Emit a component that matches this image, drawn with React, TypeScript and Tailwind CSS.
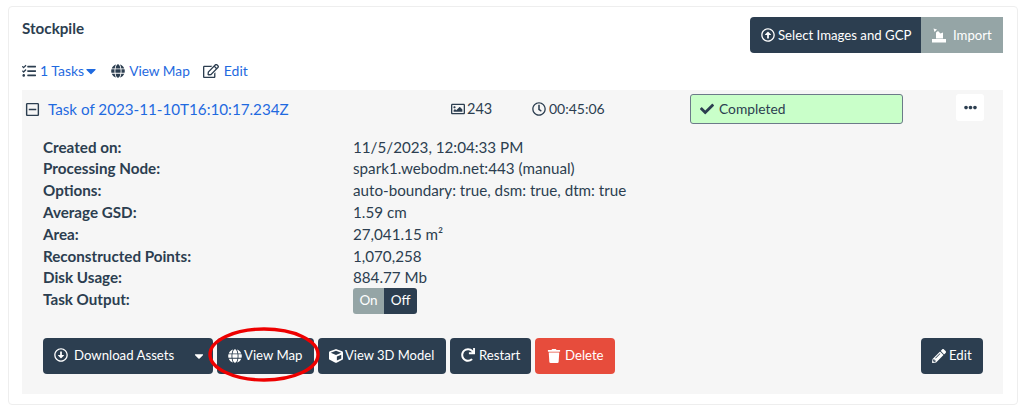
import React from "react";
import {
  FaTasks, FaGlobe, FaRegEdit, FaCaretDown, FaRegMinusSquare, FaRegImage, FaRegClock,
  FaCheck, FaEllipsisH, FaRegArrowAltCircleUp, FaRegArrowAltCircleDown, FaCube, FaRedo,
  FaTrash, FaPencilAlt,
} from "react-icons/fa";

const rows: [string, string][] = [
  ["Created on:", "11/5/2023, 12:04:33 PM"],
  ["Processing Node:", "spark1.webodm.net:443 (manual)"],
  ["Options:", "auto-boundary: true, dsm: true, dtm: true"],
  ["Average GSD:", "1.59 cm"],
  ["Area:", "27,041.15 m²"],
  ["Reconstructed Points:", "1,070,258"],
  ["Disk Usage:", "884.77 Mb"],
];

function ImportIcon() {
  return (
    <svg width="16" height="15" viewBox="0 0 16 15" fill="currentColor">
      <path d="M1 11h14v3.5H1z" />
      <path d="M5 4.5l2-1.5 2.5 2.5 2.5-1v6H5z" />
      <path d="M2.5 0.5l3.5 1-2.5 2.5z" />
    </svg>
  );
}

function Btn({ children, className = "" }: { children: React.ReactNode; className?: string }) {
  return (
    <div className={`flex h-9 items-center whitespace-nowrap rounded-[4px] bg-[#2c3e50] text-white ${className}`}>
      {children}
    </div>
  );
}

export default function App() {
  return (
    <div className="h-[415px] bg-white pt-[6px] pl-2 pr-[6px] font-['Lato','Liberation_Sans',sans-serif] text-[15.2px] leading-[21.4px] text-[#2c3e50]">
      <div className="h-[399px] rounded-[4px] border border-[#eeeeee] bg-white pl-[13px] pr-[14px] pt-[10px]">
        <div className="flex items-start justify-between">
          <div className="pt-[1px] font-bold">Stockpile</div>
          <div className="flex h-9 text-[13.2px]">
            <div className="flex w-[171px] items-center gap-[3px] rounded-l-[4px] bg-[#2c3e50] pl-[11px] text-white">
              <FaRegArrowAltCircleUp className="text-[14px]" />
              <span className="pt-[1px]">Select Images and GCP</span>
            </div>
            <div className="flex w-[82px] items-center gap-[6px] bg-[#95a5a6] pl-[10px] text-white">
              <ImportIcon />
              <span className="pt-[1px]">Import</span>
            </div>
          </div>
        </div>
        <div className="mt-[7px] flex h-[21px] items-center text-[14px] text-[#1f6ae0]">
          <FaTasks className="text-[14px] text-[#2c3e50]" />
          <span className="ml-[4px]">1 Tasks</span>
          <FaCaretDown className="-ml-[1px] text-[16px]" />
          <FaGlobe className="ml-[12px] text-[14px] text-[#2c3e50]" />
          <span className="ml-[4px] text-[13.7px]">View Map</span>
          <FaRegEdit className="ml-[13px] text-[16px] text-[#2c3e50]" />
          <span className="ml-[5px]">Edit</span>
        </div>
        <div className="relative mt-[9px] h-[304px] bg-[#f6f6f6] pt-[4px]">
          <div className="flex h-[30px] items-center">
            <FaRegMinusSquare className="ml-[3px] text-[15px]" />
            <span className="ml-[8px] w-[403px] pt-[1px] text-[#1f6ae0]">Task of 2023-11-10T16:10:17.234Z</span>
            <div className="flex w-[81px] items-center gap-[2px] text-[14.5px]">
              <FaRegImage className="text-[14px]" />
              <span>243</span>
            </div>
            <div className="flex w-[158px] items-center gap-[3px] text-[14px]">
              <FaRegClock className="text-[14px]" />
              <span>00:45:06</span>
            </div>
            <div className="flex h-[30px] w-[213px] items-center gap-[5px] rounded-[3px] border border-[#6c7a89] bg-[#c9ffc9] pl-[9px] text-[13.8px]">
              <FaCheck className="text-[14px]" />
              <span>Completed</span>
            </div>
            <div className="ml-[53px] flex h-[27px] w-[28px] items-center justify-center self-start rounded-[3px] bg-white">
              <FaEllipsisH className="text-[13px]" />
            </div>
          </div>
          <div className="mt-[12.4px] pl-[21px]">
            {rows.map(([k, v]) => (
              <div key={k} className="flex h-[21.8px] items-center">
                <div className="w-[310px] font-bold">{k}</div>
                <div>{v}</div>
              </div>
            ))}
            <div className="flex h-[26px] items-start">
              <div className="w-[310px] font-bold">Task Output:</div>
              <div className="-mt-[1px] flex h-[26px] w-[64px] overflow-hidden rounded-[3px] text-[13.5px] text-white">
                <div className="flex w-[31px] items-center justify-center bg-[#95a5a6]">On</div>
                <div className="flex flex-1 items-center justify-center bg-[#2c3e50]">Off</div>
              </div>
            </div>
          </div>
          <div className="mt-[22.6px] flex gap-1 pl-[21px] pr-5 text-[13.2px]">
            <Btn className="w-[170px] pl-[11px]">
              <FaRegArrowAltCircleDown className="-mt-[2px] text-[14px]" />
              <span className="ml-[6px]">Download Assets</span>
              <FaCaretDown className="ml-[18px] text-[14px]" />
            </Btn>
            <Btn className="w-[97px] pl-[11px]">
              <FaGlobe className="text-[14px]" />
              <span className="ml-[2px]">View Map</span>
            </Btn>
            <Btn className="w-[128px] pl-[11px]">
              <FaCube className="text-[14px]" />
              <span className="ml-[2px] text-[13px]">View 3D Model</span>
            </Btn>
            <Btn className="w-[81px] pl-[11px]">
              <FaRedo className="-mt-[1px] text-[14px]" />
              <span className="ml-[4px]">Restart</span>
            </Btn>
            <Btn className="w-[80px] bg-[#e74c3c] pl-[12px]">
              <FaTrash className="text-[14px]" />
              <span className="ml-[4px]">Delete</span>
            </Btn>
            <Btn className="ml-auto w-[62px] pl-[11px]">
              <FaPencilAlt className="text-[14px]" />
              <span className="ml-[3px]">Edit</span>
            </Btn>
          </div>
          <svg className="absolute left-[186px] top-[236px]" width="112" height="58" viewBox="0 0 112 58" fill="none">
            <ellipse cx="56" cy="28.5" rx="54" ry="25.5" stroke="#ee0000" strokeWidth="3.4" />
          </svg>
        </div>
      </div>
    </div>
  );
}
